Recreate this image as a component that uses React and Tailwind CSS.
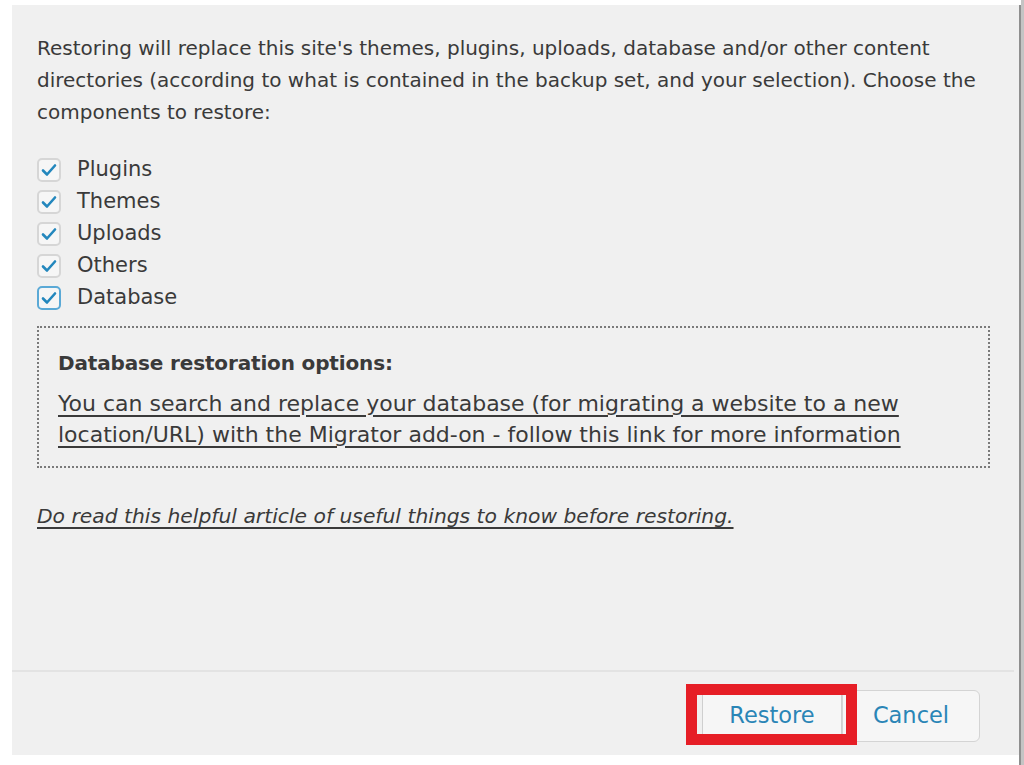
import React from "react";

const items = ["Plugins", "Themes", "Uploads", "Others", "Database"];

function Check({ focused }) {
  return (
    <span
      className={
        "flex h-[24px] w-[24px] shrink-0 items-center justify-center rounded-[5px] border-2 bg-[#f6f6f6] " +
        (focused ? "border-[#5aa9d6]" : "border-[#d6d6d6]")
      }
    >
      <svg width="16" height="14" viewBox="0 0 16 14" fill="none">
        <path d="M2 7.5 L6 11.5 L14 2.5" stroke="#2387bd" strokeWidth="2.6" strokeLinecap="round" strokeLinejoin="round" />
      </svg>
    </span>
  );
}

export default function App() {
  return (
    <div className="flex h-[765px] w-[1024px] overflow-hidden bg-white font-['DejaVu_Sans',sans-serif] text-[#3a3a3a]">
      <div className="relative ml-[12px] mt-[5px] flex h-[750px] w-[1007px] flex-col bg-[#f0f0f0]">
        <div className="px-[25px] pt-[27px]">
          <p className="text-[20px] leading-[32px] whitespace-nowrap">
            Restoring will replace this site's themes, plugins, uploads, database and/or other content
            <br />
            directories (according to what is contained in the backup set, and your selection). Choose the
            <br />
            components to restore:
          </p>

          <div className="mt-[26px] flex flex-col">
            {items.map((it) => (
              <label key={it} className="flex h-[32px] items-center gap-[16px] text-[21px]">
                <Check focused={it === "Database"} />
                <span>{it}</span>
              </label>
            ))}
          </div>

          <div className="mt-[12px] w-[953px] border-2 border-dotted border-[#7a7a7a] px-[19px] pt-[19px] pb-[16px]">
            <h4 className="text-[20px] font-bold leading-[32px] tracking-[-0.15px]">Database restoration options:</h4>
            <a className="mt-[9px] block whitespace-nowrap text-[22px] leading-[31px] underline decoration-[1.5px] underline-offset-[4px]">
              You can search and replace your database (for migrating a website to a new
              <br />
              location/URL) with the Migrator add-on - follow this link for more information
            </a>
          </div>

          <a className="mt-[32px] block whitespace-nowrap text-[20.3px] italic leading-[32px] underline underline-offset-[4px]">
            Do read this helpful article of useful things to know before restoring.
          </a>
        </div>

        <div className="flex-1" />

        <div className="mr-[5px] flex h-[85px] items-start justify-end border-t-2 border-[#e3e3e3] pt-[18px] pr-[34px]">
          <button className="h-[52px] w-[140px] rounded-[5px] border border-[#cfcfcf] bg-[#f6f6f6] text-[22.5px] text-[#2a85b6]">
            Restore
          </button>
          <button className="h-[52px] w-[138px] rounded-[6px] border border-[#d4d4d4] bg-[#f6f6f6] text-[22.5px] text-[#2a85b6]">
            Cancel
          </button>
        </div>

        <div className="pointer-events-none absolute left-[674px] top-[679px] h-[61px] w-[171px] border-[11px] border-[#e61e26]" />
      </div>
      <div className="mt-[5px] h-[760px] w-[2px] bg-[#8f8f8f]" />
      <div className="h-[765px] flex-1 bg-[#c4c4c4]" />
    </div>
  );
}
